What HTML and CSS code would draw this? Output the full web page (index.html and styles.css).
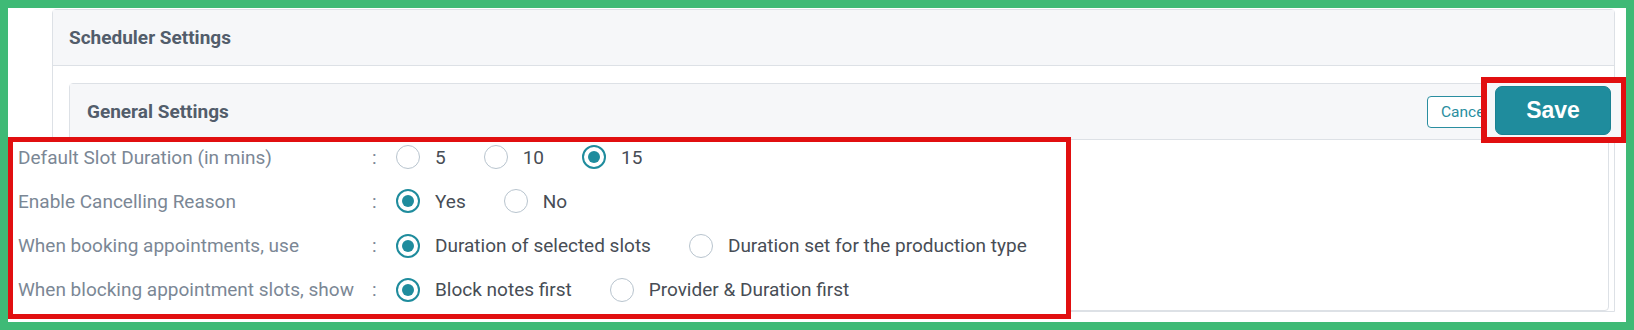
FILE: index.html
```html
<!DOCTYPE html>
<html lang="en">
<head>
<meta charset="utf-8">
<title>Scheduler Settings</title>
<link rel="stylesheet" href="styles.css">
</head>
<body>
<div class="frame">
  <section class="outer-card">
    <header class="outer-head">Scheduler Settings</header>
    <div class="outer-body">
      <section class="inner-card">
        <header class="inner-head">
          <span class="inner-title">General Settings</span>
          <div class="actions">
            <button class="btn-cancel" type="button">Cancel</button>
          </div>
        </header>
        <div class="inner-body"></div>
      </section>
    </div>
  </section>

  <div class="annot-save">
    <button class="btn-save" type="button">Save</button>
  </div>

  <form class="annot-form">
    <div class="row">
      <span class="label">Default Slot Duration (in mins)</span>
      <span class="colon">:</span>
      <div class="options">
        <label class="opt"><input class="radio" type="radio" name="slot"><span>5</span></label>
        <label class="opt"><input class="radio" type="radio" name="slot"><span>10</span></label>
        <label class="opt"><input class="radio" type="radio" name="slot" checked><span>15</span></label>
      </div>
    </div>
    <div class="row">
      <span class="label">Enable Cancelling Reason</span>
      <span class="colon">:</span>
      <div class="options">
        <label class="opt"><input class="radio" type="radio" name="cancel" checked><span>Yes</span></label>
        <label class="opt"><input class="radio" type="radio" name="cancel"><span>No</span></label>
      </div>
    </div>
    <div class="row">
      <span class="label">When booking appointments, use</span>
      <span class="colon">:</span>
      <div class="options">
        <label class="opt"><input class="radio" type="radio" name="book" checked><span>Duration of selected slots</span></label>
        <label class="opt"><input class="radio" type="radio" name="book"><span>Duration set for the production type</span></label>
      </div>
    </div>
    <div class="row">
      <span class="label">When blocking appointment slots, show</span>
      <span class="colon">:</span>
      <div class="options">
        <label class="opt"><input class="radio" type="radio" name="block" checked><span>Block notes first</span></label>
        <label class="opt"><input class="radio" type="radio" name="block"><span>Provider &amp; Duration first</span></label>
      </div>
    </div>
  </form>
</div>
</body>
</html>
```

FILE: styles.css
```css
* { box-sizing: border-box; }

html, body {
  margin: 0;
  padding: 0;
  background: #ffffff;
}

body {
  font-family: Roboto, "Liberation Sans", Arial, sans-serif;
}

.frame {
  position: relative;
  width: 1634px;
  height: 330px;
  border: 8px solid #3fba76;
  background: #ffffff;
  overflow: hidden;
  padding: 1px 11px 0 44px;
}

.outer-card {
  border: 1px solid #dde1e6;
  border-radius: 4px 4px 0 0;
  background: #ffffff;
}

.outer-head {
  height: 56px;
  display: flex;
  align-items: center;
  padding-left: 16px;
  background: #f6f7f9;
  border-bottom: 1px solid #dde1e6;
  font-size: 19px;
  font-weight: 700;
  color: #525d6b;
}

.outer-body {
  padding: 17px 5px 0 16px;
}

.inner-card {
  border: 1px solid #dde1e6;
  border-radius: 4px;
  background: #ffffff;
}

.inner-head {
  height: 56px;
  display: flex;
  align-items: center;
  justify-content: space-between;
  padding: 0 105px 0 17px;
  background: #f6f7f9;
  border-bottom: 1px solid #dde1e6;
}

.inner-title {
  font-size: 19px;
  font-weight: 700;
  color: #525d6b;
}

.actions {
  display: flex;
  gap: 8px;
}

.btn-cancel {
  width: 76px;
  height: 32px;
  border-radius: 4px;
  font-family: Roboto, "Liberation Sans", Arial, sans-serif;
  font-size: 15.5px;
  padding: 0 13px;
  text-align: left;
  background: #ffffff;
  border: 1px solid #2a8ea0;
  color: #2a8ea0;
}

.inner-body {
  height: 170px;
}

/* annotation overlays */
.annot-save {
  position: absolute;
  left: 1473px;
  top: 69px;
  width: 146px;
  height: 66px;
  border: 6px solid #e10f10;
  background: #f6f7f9;
  padding: 3px 0 0 8px;
}

.btn-save {
  width: 116px;
  height: 49px;
  border-radius: 7px;
  border: 1px solid #1b8192;
  background: #1f8c9d;
  color: #ffffff;
  font-family: "Liberation Sans", Arial, sans-serif;
  font-weight: 700;
  font-size: 23px;
  padding: 0;
}

.annot-form {
  position: absolute;
  left: 0;
  top: 129px;
  width: 1063px;
  height: 182px;
  margin: 0;
  border: 5px solid #e10f10;
  background: #ffffff;
  padding: 0 0 0 5px;
  display: flex;
  flex-direction: column;
  gap: 14.3px;
}

.row {
  height: 30px;
  display: grid;
  grid-template-columns: 354px 24px 1fr;
  align-items: center;
  font-size: 19px;
}

.label {
  color: #7b8795;
  white-space: nowrap;
}

.colon {
  color: #7b8795;
}

.options {
  display: flex;
  align-items: center;
  gap: 38px;
}

.opt {
  display: inline-flex;
  align-items: center;
  gap: 15px;
  color: #474d55;
  white-space: nowrap;
}

.radio {
  appearance: none;
  -webkit-appearance: none;
  width: 24px;
  height: 24px;
  margin: 0;
  border: 1.5px solid #b8c4ce;
  border-radius: 50%;
  background: #ffffff;
  display: grid;
  place-content: center;
}

.radio:checked {
  border: 2.5px solid #1f8c9d;
}

.radio:checked::before {
  content: "";
  display: block;
  width: 12px;
  height: 12px;
  border-radius: 50%;
  background: #1f8c9d;
}
```
